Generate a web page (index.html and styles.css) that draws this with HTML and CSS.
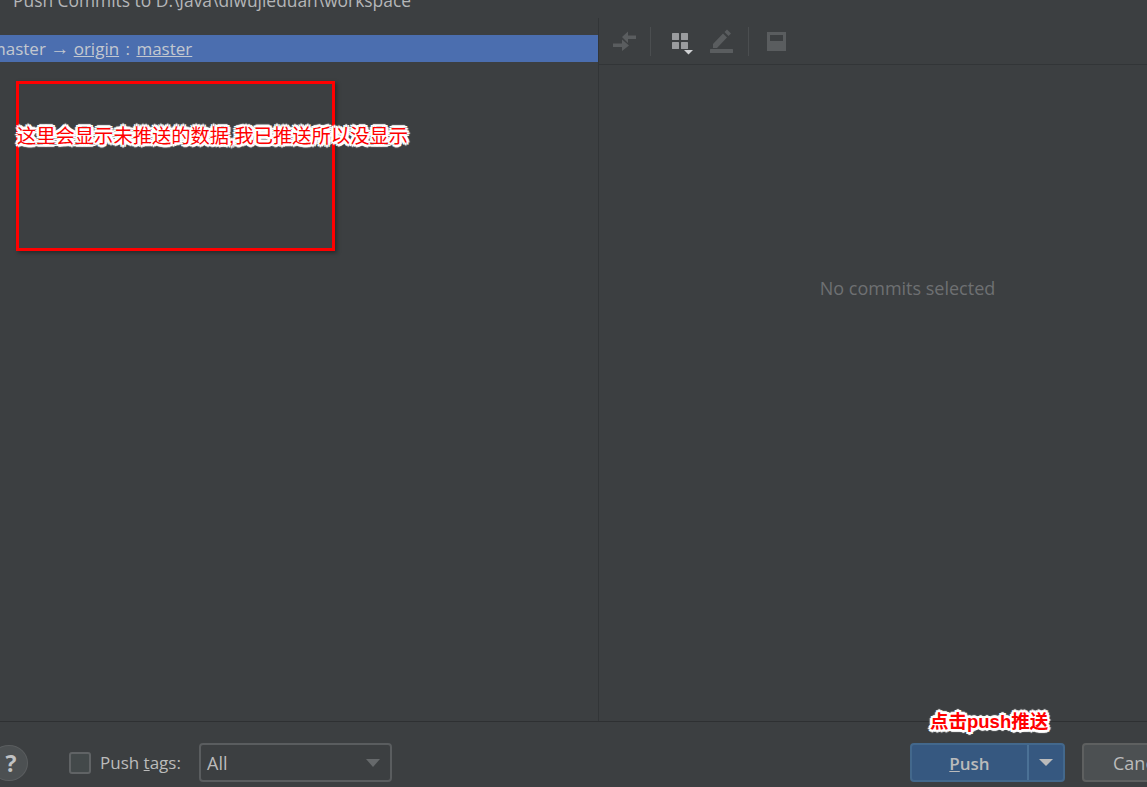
FILE: index.html
```html
<!DOCTYPE html>
<html lang="en">
  <head>
    <meta charset="UTF-8" />
    <title>Push Commits</title>
    <link rel="stylesheet" href="styles.css">
  </head>
  <body>
    <div class="dialog">
      <div class="title-bar"><span class="title">Push Commits to D:\Java\diwujieduan\workspace</span></div>

      <div class="main">
        <div class="left-pane">
          <div class="branch-row">
            <span class="branch-text">master <span class="branch-arrow">→</span> <u>origin</u> <span class="branch-colon">:</span> <u>master</u></span>
          </div>
        </div>

        <div class="right-pane">
          <div class="toolbar">
            <svg class="icon" viewBox="0 0 24 24">
              <path d="M9 8l6-5.500v4h8v3.500h-8v4z" fill="#5a5d5f" />
              <path d="M16 16.500l-7 5.500v-4H0v-3.500h9v-4z" fill="#5a5d5f" />
            </svg>
            <div class="toolbar-sep"></div>
            <svg class="icon icon-grid" viewBox="0 0 24 24">
              <rect x="4" y="4" width="7" height="7" rx="0.5" fill="#9a9c9e" />
              <rect x="13" y="4" width="7" height="7" rx="0.5" fill="#9a9c9e" />
              <rect x="4" y="13" width="7" height="7" rx="0.5" fill="#9a9c9e" />
              <rect x="13" y="13" width="7" height="7" rx="0.5" fill="#9a9c9e" />
              <path d="M16 21h9l-4.500 4.500z" fill="#d0d2d4" />
            </svg>
            <svg class="icon icon-pencil" viewBox="0 0 24 24">
              <path d="M3 15L13 4.500l4 4L7 19H3zM14.500 3l2.500-2.500 4 4-2.500 2.500z" fill="#5a5d5f" />
              <rect x="0" y="20" width="23" height="4" rx="0.500" fill="#5a5d5f" />
            </svg>
            <div class="toolbar-sep"></div>
            <svg class="icon" viewBox="0 0 24 24">
              <path fill-rule="evenodd" d="M1 3h19v19H1zM4 6v6h13V6z" fill="#5a5d5f" />
            </svg>
          </div>
          <div class="details">
            <span class="empty-text">No commits selected</span>
          </div>
        </div>
      </div>

      <div class="footer">
        <div class="help-btn">?</div>
        <label class="push-tags">
          <span class="checkbox"></span>
          <span>Push <u>t</u>ags:</span>
        </label>
        <div class="select">
          <span>All</span>
          <span class="select-arrow"></span>
        </div>
        <div class="push-btn">
          <span class="push-label"><u>P</u>ush</span>
          <span class="push-drop"><span class="drop-arrow"></span></span>
        </div>
        <div class="cancel-btn">Cancel</div>
      </div>

      <div class="red-box"></div>
      <div class="note note-box">这里会显示未推送的数据,我已推送所以没显示</div>
      <div class="note note-push">点击push推送</div>
    </div>
  </body>
</html>
```

FILE: styles.css
```css
html,
body {
  margin: 0;
  padding: 0;
  height: 100%;
  overflow: hidden;
}

body {
  background-color: #3c3f41;
  font-family: "Open Sans", "Noto Sans", sans-serif;
  color: #bbbbbb;
}

.dialog {
  position: relative;
  display: flex;
  flex-direction: column;
  width: 1147px;
  height: 787px;
  overflow: hidden;
}

.title-bar {
  height: 18px;
  flex-shrink: 0;
  display: flex;
  align-items: flex-end;
  padding-left: 13px;
  overflow: hidden;
}

.title {
  font-size: 17.4px;
  line-height: 26px;
  white-space: nowrap;
  color: #b4b6b8;
  flex-shrink: 0;
  margin-bottom: 5px;
}

.main {
  flex: 1;
  display: flex;
  min-height: 0;
  border-bottom: 1px solid #2e3032;
}

.left-pane {
  width: 598px;
  flex-shrink: 0;
  padding-top: 17px;
  border-right: 1px solid #323537;
}

.branch-row {
  height: 27px;
  background-color: #4b6eaf;
  display: flex;
  align-items: center;
  overflow: hidden;
}

.branch-text {
  margin-left: -10px;
  font-size: 17px;
  white-space: nowrap;
  color: #c3c8d0;
}

.branch-arrow {
  font-family: "Liberation Sans", sans-serif;
  font-size: 19px;
  line-height: 1;
}

.branch-colon {
  margin: 0 2px;
}

.right-pane {
  flex: 1;
  display: flex;
  flex-direction: column;
  min-width: 0;
}

.toolbar {
  height: 47px;
  flex-shrink: 0;
  display: flex;
  align-items: center;
  box-sizing: border-box;
  padding: 0 0 0 14px;
  border-bottom: 1px solid #323537;
}

.icon {
  width: 24px;
  height: 24px;
  flex-shrink: 0;
  overflow: visible;
}

.icon-grid {
  margin-right: 18px;
}

.icon-pencil {
  margin-right: 1px;
}

.toolbar-sep {
  width: 1px;
  height: 29px;
  background-color: #4b4e50;
  margin: 0 17px 0 13px;
}

.details {
  flex: 1;
  display: flex;
  justify-content: center;
  padding: 211px 0 0 69px;
}

.empty-text {
  font-size: 18px;
  line-height: 24px;
  color: #6e7072;
}

.footer {
  height: 65px;
  flex-shrink: 0;
  display: flex;
  align-items: center;
  padding-top: 16px;
  box-sizing: border-box;
  font-size: 17px;
  color: #bbbbbb;
}

.help-btn {
  width: 38px;
  height: 36px;
  margin-left: -10px;
  flex-shrink: 0;
  border-radius: 50%;
  background-color: #4c5052;
  border: 1px solid #5a5d5f;
  box-sizing: border-box;
  display: flex;
  align-items: center;
  justify-content: center;
  padding-left: 4px;
  font-size: 23px;
  font-weight: 700;
  color: #c0c2c4;
}

.push-tags {
  display: flex;
  align-items: center;
  flex-shrink: 0;
  gap: 9px;
  width: 113px;
  margin-left: 41px;
  white-space: nowrap;
}

.checkbox {
  width: 22px;
  height: 22px;
  flex-shrink: 0;
  box-sizing: border-box;
  border: 2px solid #606365;
  border-radius: 3px;
  background-color: #43494a;
}

.select {
  width: 193px;
  height: 39px;
  margin-left: 17px;
  flex-shrink: 0;
  box-sizing: border-box;
  border: 2px solid #5a5d5f;
  border-radius: 4px;
  padding: 0 10px 0 6px;
  display: flex;
  align-items: center;
  justify-content: space-between;
  font-size: 18px;
}

.select-arrow {
  width: 0;
  height: 0;
  border-left: 7px solid transparent;
  border-right: 7px solid transparent;
  border-top: 8px solid #66696b;
}

.push-btn {
  width: 155px;
  height: 39px;
  margin-left: 518px;
  flex-shrink: 0;
  box-sizing: border-box;
  border: 2px solid #43688c;
  border-radius: 4px;
  background-color: #365880;
  display: flex;
  font-weight: 600;
  font-size: 17px;
  color: #bbbbbb;
}

.push-label {
  width: 115px;
  text-align: center;
  line-height: 37px;
  border-right: 2px solid #4b7196;
}

.push-drop {
  flex: 1;
  display: flex;
  align-items: center;
  justify-content: center;
}

.drop-arrow {
  width: 0;
  height: 0;
  border-left: 7px solid transparent;
  border-right: 7px solid transparent;
  border-top: 7px solid #bbbbbb;
}

.cancel-btn {
  width: 100px;
  height: 39px;
  margin-left: 17px;
  flex-shrink: 0;
  box-sizing: border-box;
  border: 2px solid #5e6060;
  border-radius: 4px;
  background-color: #4c5052;
  padding-left: 29px;
  line-height: 37px;
  font-size: 18px;
  color: #bbbbbb;
}

.red-box {
  position: absolute;
  left: 16px;
  top: 81px;
  width: 319px;
  height: 170px;
  box-sizing: border-box;
  border: 3px solid #ff0000;
  box-shadow: 2px 2px 4px rgba(0, 0, 0, 0.35);
}

.note {
  position: absolute;
  font-family: "Liberation Sans", "Noto Sans CJK SC", sans-serif;
  color: #ff0000;
  white-space: nowrap;
  text-shadow: 2px 0 0 #fff, -2px 0 0 #fff, 0 2px 0 #fff, 0 -2px 0 #fff,
    2px 2px 0 #fff, -2px 2px 0 #fff, 2px -2px 0 #fff, -2px -2px 0 #fff,
    3px 0 1px #fff, -3px 0 1px #fff, 0 3px 1px #fff, 0 -3px 1px #fff;
}

.note-box {
  left: 17px;
  top: 124px;
  font-size: 19.3px;
  line-height: 26px;
}

.note-push {
  left: 930px;
  top: 710px;
  font-size: 18.5px;
  line-height: 24px;
  font-weight: 700;
}
```
